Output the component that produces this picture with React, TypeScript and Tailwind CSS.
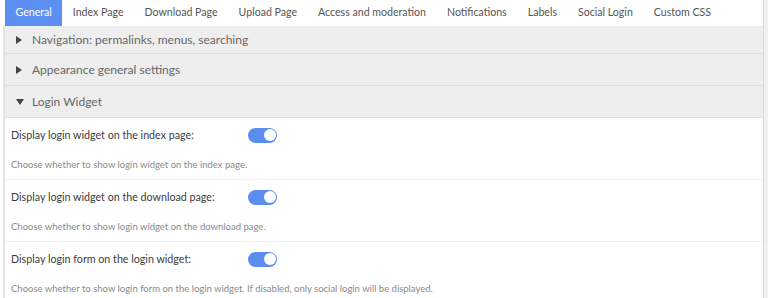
import React from "react";

const tabs = [
  "General",
  "Index Page",
  "Download Page",
  "Upload Page",
  "Access and moderation",
  "Notifications",
  "Labels",
  "Social Login",
  "Custom CSS",
];

const rows = [
  {
    label: "Display login widget on the index page:",
    desc: "Choose whether to show login widget on the index page.",
  },
  {
    label: "Display login widget on the download page:",
    desc: "Choose whether to show login widget on the download page.",
  },
  {
    label: "Display login form on the login widget:",
    desc: "Choose whether to show login form on the login widget. If disabled, only social login will be displayed.",
  },
];

function Toggle() {
  return (
    <div className="w-[29px] h-[15px] rounded-full bg-[#5b8def] flex items-center justify-end pr-[1.5px]">
      <div className="w-[12px] h-[12px] rounded-full bg-white" />
    </div>
  );
}

function Header({ title, open, h }: { title: string; open?: boolean; h: string }) {
  return (
    <div className={`${h} bg-[#eeeeee] border-b border-[#e0e0e0] flex items-center pl-[11px]`}>
      <span className="w-[16px] flex items-center">
        {open ? (
          <svg width="8" height="6" viewBox="0 0 8 6">
            <polygon points="0,0 8,0 4,6" fill="#444" />
          </svg>
        ) : (
          <svg width="6" height="8" viewBox="0 0 6 8">
            <polygon points="0,0 6,4 0,8" fill="#444" />
          </svg>
        )}
      </span>
      <span className="text-[12px] text-[#666] whitespace-nowrap">{title}</span>
    </div>
  );
}

export default function App() {
  return (
    <div
      className="w-[768px] h-[298px] overflow-hidden flex bg-white"
      style={{ fontFamily: 'Lato, "Noto Sans", sans-serif' }}
    >
      <div className="w-[764px] border-r border-[#d8d8d8] flex flex-col">
        <div className="h-[26px] flex pl-[5px]">
          {tabs.map((t, i) => (
            <div
              key={t}
              className={`h-[26px] flex items-center px-[10.5px] text-[10.6px] whitespace-nowrap ${
                i === 0 ? "bg-[#5d8ff2] text-white" : "text-[#555]"
              }`}
            >
              {t}
            </div>
          ))}
        </div>
        <div className="ml-[3px] border-l-2 border-[#e4e4e4] flex-1 flex flex-col">
          <Header title="Navigation: permalinks, menus, searching" h="h-[28px]" />
          <Header title="Appearance general settings" h="h-[32px]" />
          <Header title="Login Widget" open h="h-[32px]" />
          {rows.map((r) => (
            <div key={r.label} className="h-[62px] border-b border-[#f0f0f0] pl-[6px] pt-[8px]">
              <div className="flex items-center h-[18px]">
                <span className="w-[237px] text-[10.7px] text-[#3c3c3c] whitespace-nowrap">{r.label}</span>
                <Toggle />
              </div>
              <div className="mt-[14px] text-[9.5px] text-[#8a8a8a] whitespace-nowrap">{r.desc}</div>
            </div>
          ))}
        </div>
      </div>
      <div className="flex-1 bg-[#f1f1f1]" />
    </div>
  );
}
